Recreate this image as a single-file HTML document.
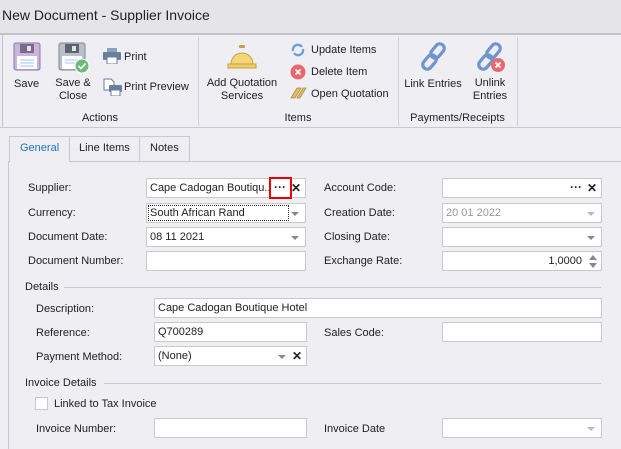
<!DOCTYPE html>
<html><head><meta charset="utf-8"><style>
*{box-sizing:border-box;margin:0;padding:0}
body{width:621px;height:449px;overflow:hidden;background:#eeeef3;font-family:"Liberation Sans",sans-serif;font-size:11px;color:#222;position:relative}
.a{position:absolute;white-space:nowrap}
.t{position:absolute;white-space:nowrap;line-height:14px}
.in{position:absolute;background:#fff;border:1px solid #c8c8d0;height:20px;overflow:visible}
.in span{position:absolute;left:3px;top:2px;line-height:14px}
.arr{position:absolute;right:6px;top:8px;width:0;height:0;border-left:4px solid transparent;border-right:4px solid transparent;border-top:4px solid #888}
.x{position:absolute;right:4px;top:1px;font-weight:bold;font-size:12px;line-height:16px}
.dots{position:absolute;font-weight:bold;line-height:12px;font-size:12px}
.c{text-align:center}
</style></head><body>
<div class="a" style="left:0;top:0;width:621px;height:34px;background:#e4e4e9"></div>
<div class="a" style="left:2px;top:5px;font-size:14px;line-height:20px;color:#222">New Document - Supplier Invoice</div>
<div class="a" style="left:0;top:33px;width:621px;height:2px;background:#c3c3cc"></div>
<div class="a" style="left:2px;top:35px;width:1px;height:92px;background:#c3c3cc"></div>
<div class="a" style="left:0;top:127px;width:621px;height:1px;background:#c8c8d0"></div>
<div class="a" style="left:198px;top:37px;width:1px;height:89px;background:#cfcfd8"></div>
<div class="a" style="left:398px;top:37px;width:1px;height:89px;background:#cfcfd8"></div>
<div class="a" style="left:517px;top:37px;width:1px;height:89px;background:#cfcfd8"></div>

<svg class="a" style="left:13px;top:42px" width="28" height="30"><rect x="1" y="1" width="26" height="27" rx="2" fill="#c9b6dd" stroke="#8e77a8"/><rect x="7" y="2" width="14" height="9" fill="#7a6b88"/><rect x="14" y="4" width="4" height="5" fill="#e7e0ef"/><rect x="4" y="14" width="20" height="13" fill="#fff"/><path d="M7 18h14M7 21h14M7 24h14" stroke="#9fc7e8"/></svg>
<div class="t" style="left:14px;top:77px">Save</div>
<svg class="a" style="left:58px;top:42px" width="32" height="32"><rect x="1" y="1" width="26" height="27" rx="2" fill="#b9c0cc" stroke="#7d8794"/><rect x="7" y="2" width="14" height="9" fill="#5c6470"/><rect x="14" y="4" width="4" height="5" fill="#e0e3e8"/><rect x="4" y="14" width="20" height="13" fill="#fff"/><path d="M7 18h14M7 21h14" stroke="#9fc7e8"/><circle cx="24" cy="24" r="7" fill="#6dbb7a" stroke="#fff"/><path d="M20.5 24l2.5 2.5 4.5-5" stroke="#fff" stroke-width="1.6" fill="none"/></svg>
<div class="t c" style="left:50px;top:77px;width:46px;line-height:13px">Save &amp;<br>Close</div>
<svg class="a" style="left:103px;top:48px" width="18" height="16"><rect x="4" y="0" width="10" height="4" fill="#8aa0bf"/><rect x="0" y="4" width="18" height="8" rx="1" fill="#6a7f9c"/><rect x="4" y="9" width="10" height="7" fill="#fff" stroke="#6a7f9c"/></svg>
<div class="t" style="left:124px;top:50px">Print</div>
<svg class="a" style="left:103px;top:78px" width="19" height="18"><path d="M1 1h7l3 3v8H1z" fill="#fff" stroke="#6a7f9c"/><rect x="6" y="7" width="13" height="7" rx="1" fill="#6a7f9c"/><rect x="8" y="12" width="9" height="6" fill="#fff" stroke="#6a7f9c"/></svg>
<div class="t" style="left:124px;top:80px">Print Preview</div>
<div class="t c" style="left:60px;top:111px;width:80px">Actions</div>

<svg class="a" style="left:227px;top:44px" width="30" height="26"><rect x="12" y="1" width="6" height="3" rx="1" fill="#c9a043"/><path d="M4 20a11 11 0 0 1 22 0z" fill="#f5d679" stroke="#c9a043"/><rect x="1" y="20" width="28" height="4" fill="#f0cc6a" stroke="#c9a043"/></svg>
<div class="t c" style="left:202px;top:77px;width:80px;line-height:13px">Add Quotation<br>Services</div>
<svg class="a" style="left:290px;top:42px" width="16" height="16"><path d="M3 9a5 5 0 0 1 9-4M13 7a5 5 0 0 1-9 4" stroke="#6f9fd8" stroke-width="2.4" fill="none"/></svg>
<div class="t" style="left:311px;top:43px">Update Items</div>
<svg class="a" style="left:290px;top:64px" width="16" height="16"><circle cx="8" cy="8" r="7.5" fill="#e9686f"/><path d="M5.5 5.5l5 5M10.5 5.5l-5 5" stroke="#fff" stroke-width="1.6"/></svg>
<div class="t" style="left:311px;top:65px">Delete Item</div>
<svg class="a" style="left:290px;top:86px" width="17" height="14"><path d="M1 12l6-10 4 0-6 10zM7 12l6-10 3 0-6 10z" fill="#e2be6a" stroke="#b08a3a" stroke-width=".8"/></svg>
<div class="t" style="left:311px;top:87px">Open Quotation</div>
<div class="t c" style="left:270px;top:111px;width:56px">Items</div>

<svg class="a" style="left:419px;top:42px" width="30" height="30"><g fill="none" stroke="#6f95cc" stroke-width="3.2"><rect x="14" y="1" width="9" height="16" rx="4.5" transform="rotate(40 18.5 9)"/><rect x="6" y="12" width="9" height="16" rx="4.5" transform="rotate(40 10.5 20)"/></g></svg>
<div class="t c" style="left:400px;top:77px;width:66px">Link Entries</div>
<svg class="a" style="left:475px;top:42px" width="32" height="32"><g fill="none" stroke="#6f95cc" stroke-width="3.2"><rect x="14" y="1" width="9" height="16" rx="4.5" transform="rotate(40 18.5 9)"/><rect x="6" y="12" width="9" height="16" rx="4.5" transform="rotate(40 10.5 20)"/></g><circle cx="23" cy="23" r="7" fill="#e9686f"/><path d="M20.5 20.5l5 5M25.5 20.5l-5 5" stroke="#fff" stroke-width="1.8"/></svg>
<div class="t c" style="left:465px;top:77px;width:50px;line-height:13px">Unlink<br>Entries</div>
<div class="t c" style="left:400px;top:111px;width:115px">Payments/Receipts</div>

<div class="a" style="left:8px;top:161px;width:613px;height:1px;background:#c8c8d0"></div>
<div class="a" style="left:8px;top:161px;width:1px;height:288px;background:#c8c8d0"></div>
<div class="a" style="left:9px;top:136px;width:61px;height:26px;background:#eeeef3;border:1px solid #c8c8d0;border-bottom:none"></div>
<div class="t" style="left:20px;top:141px;color:#1e73be">General</div>
<div class="a" style="left:69px;top:136px;width:71px;height:25px;border:1px solid #c8c8d0;border-bottom:none"></div>
<div class="t" style="left:79px;top:141px">Line Items</div>
<div class="a" style="left:139px;top:136px;width:51px;height:25px;border:1px solid #c8c8d0;border-bottom:none"></div>
<div class="t" style="left:150px;top:141px">Notes</div>

<div class="t" style="left:28px;top:181px">Supplier:</div>
<div class="in" style="left:146px;top:178px;width:160px"><span>Cape Cadogan Boutiqu...</span><div class="a" style="left:122px;top:-2px;width:23px;height:22px;border:2px solid #e00;background:#fff"></div><div class="dots" style="left:127px;top:2px">···</div><div class="x">✕</div></div>
<div class="t" style="left:28px;top:206px">Currency:</div>
<div class="in" style="left:146px;top:203px;width:160px"><div class="a" style="left:1px;top:1px;width:141px;height:16px;border:1px dotted #333"></div><span style="top:2px">South African Rand</span><div class="arr"></div></div>
<div class="t" style="left:28px;top:230px">Document Date:</div>
<div class="in" style="left:146px;top:227px;width:160px"><span>08 11 2021</span><div class="arr"></div></div>
<div class="t" style="left:28px;top:254px">Document Number:</div>
<div class="in" style="left:146px;top:251px;width:160px"></div>

<div class="t" style="left:324px;top:181px">Account Code:</div>
<div class="in" style="left:442px;top:178px;width:160px"><div class="dots" style="left:127px;top:2px">···</div><div class="x">✕</div></div>
<div class="t" style="left:324px;top:206px">Creation Date:</div>
<div class="in" style="left:442px;top:203px;width:160px"><span style="color:#999">20 01 2022</span><div class="arr" style="border-top-color:#bbb"></div></div>
<div class="t" style="left:324px;top:230px">Closing Date:</div>
<div class="in" style="left:442px;top:227px;width:160px"><div class="arr"></div></div>
<div class="t" style="left:324px;top:254px">Exchange Rate:</div>
<div class="in" style="left:442px;top:251px;width:160px"><span style="left:auto;right:19px">1,0000</span><div class="a" style="right:4px;top:3px;border-left:4px solid transparent;border-right:4px solid transparent;border-bottom:5px solid #888"></div><div class="a" style="right:4px;top:11px;border-left:4px solid transparent;border-right:4px solid transparent;border-top:5px solid #888"></div></div>

<div class="t" style="left:25px;top:280px">Details</div>
<div class="a" style="left:64px;top:287px;width:537px;height:1px;background:#c8c8d0"></div>
<div class="t" style="left:36px;top:302px">Description:</div>
<div class="in" style="left:154px;top:298px;width:448px"><span>Cape Cadogan Boutique Hotel</span></div>
<div class="t" style="left:36px;top:326px">Reference:</div>
<div class="in" style="left:154px;top:322px;width:153px"><span>Q700289</span></div>
<div class="t" style="left:324px;top:326px">Sales Code:</div>
<div class="in" style="left:442px;top:322px;width:160px"></div>
<div class="t" style="left:36px;top:350px">Payment Method:</div>
<div class="in" style="left:154px;top:346px;width:153px"><span>(None)</span><div class="arr" style="right:20px"></div><div class="x">✕</div></div>

<div class="t" style="left:25px;top:376px">Invoice Details</div>
<div class="a" style="left:104px;top:383px;width:497px;height:1px;background:#c8c8d0"></div>
<div class="a" style="left:35px;top:397px;width:13px;height:13px;background:#fff;border:1px solid #c8c8d0"></div>
<div class="t" style="left:54px;top:397px">Linked to Tax Invoice</div>
<div class="t" style="left:36px;top:422px">Invoice Number:</div>
<div class="in" style="left:154px;top:418px;width:153px"></div>
<div class="t" style="left:324px;top:422px">Invoice Date</div>
<div class="in" style="left:442px;top:418px;width:160px"><div class="arr" style="border-top-color:#bbb"></div></div>
</body></html>
